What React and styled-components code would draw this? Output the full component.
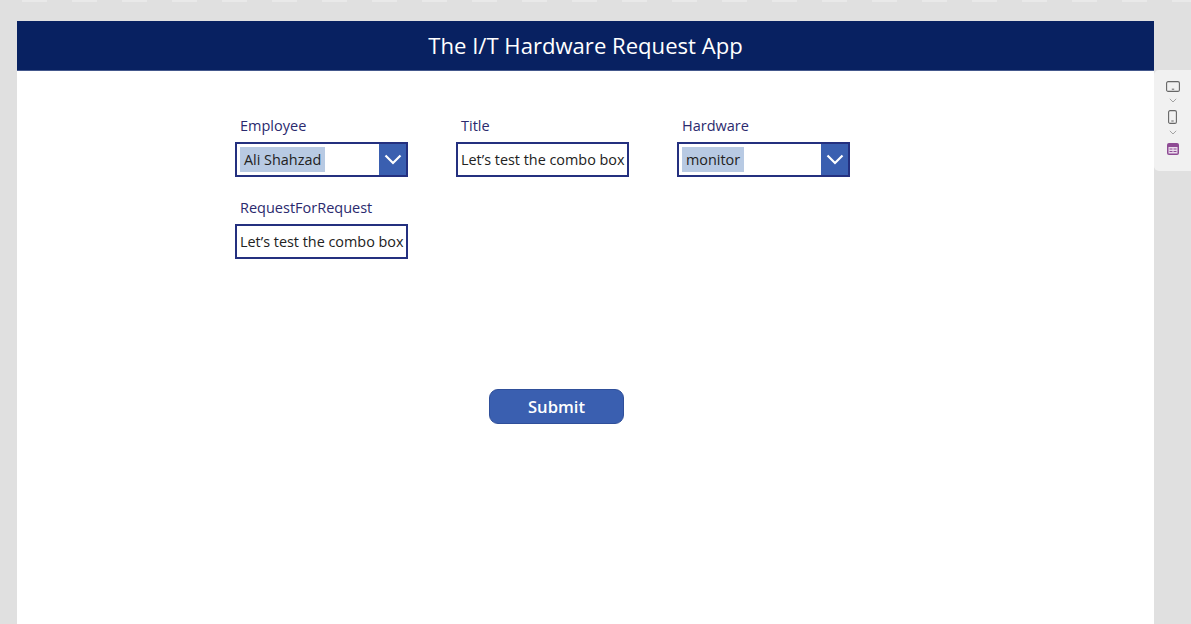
import styled, { createGlobalStyle } from "styled-components";

const GlobalStyle = createGlobalStyle`
  html, body { margin: 0; height: 100%; overflow: hidden; }
  body { background: #e0e0e0; font-family: "Open Sans", "Liberation Sans", sans-serif; }
  #root { height: 100%; }
`;

const Shell = styled.div`
  height: 624px;
  display: flex;
  padding: 21px 0 0 17px;
  box-sizing: border-box;
  position: relative;
  &::before {
    content: "";
    position: absolute;
    left: -3px;
    right: 0;
    top: 0;
    height: 2px;
    background: repeating-linear-gradient(90deg, #e0e0e0 0 25px, #e9e9e9 25px 50px);
  }
`;

const Canvas = styled.main`
  width: 1137px;
  background: #fff;
  display: flex;
  flex-direction: column;
`;

const Header = styled.header`
  height: 49px;
  flex: none;
  background: #082161;
  color: #fff;
  display: flex;
  align-items: center;
  justify-content: center;
  font-size: 22.1px;
  border-bottom: 1px solid #44588c;
  line-height: 47px;
`;

const Form = styled.form`
  display: grid;
  grid-template-columns: repeat(3, 173px);
  column-gap: 48px;
  row-gap: 21px;
  padding: 45px 0 0 218px;
`;

const Field = styled.div`
  display: flex;
  flex-direction: column;
`;

const Label = styled.label`
  height: 26px;
  padding: 0 0 0 5px;
  line-height: 20px;
  font-size: 14.5px;
  color: #2b2a6e;
`;

const Box = styled.div`
  width: 173px;
  height: 35px;
  box-sizing: border-box;
  border: 2px solid #24307f;
  background: #fff;
  display: flex;
  align-items: center;
  font-size: 14.4px;
  color: #222;
  white-space: nowrap;
  overflow: hidden;
`;

const TextValue = styled.span`
  padding-left: 3px;
`;

const Selected = styled.span`
  flex: 1;
  padding-left: 3px;
`;

const Chip = styled.span`
  display: inline-block;
  background: #b8cae3;
  padding: 0 4px;
  height: 25px;
  line-height: 25px;
`;

const Arrow = styled.span`
  width: 27px;
  align-self: stretch;
  background: #3a5fb0;
  display: flex;
  align-items: center;
  justify-content: center;
`;

const SubmitRow = styled.div`
  padding: 130px 0 0 472px;
`;

const SubmitButton = styled.button`
  width: 135px;
  height: 35px;
  border: 1px solid #2f4f9a;
  border-radius: 9px;
  background: #3a5fb0;
  color: #fff;
  font-family: inherit;
  font-size: 16.6px;
  font-weight: 600;
  padding: 0;
`;

const Rail = styled.aside`
  width: 37px;
  height: 101px;
  margin-top: 49px;
  background: #f1f1f1;
  border-radius: 5px 0 0 5px;
  display: flex;
  flex-direction: column;
  align-items: center;
  padding-top: 11px;
  box-sizing: border-box;
`;

const Chevron = () => (
  <svg width="18" height="11" viewBox="0 0 18 11" fill="none">
    <path d="M1.5 1.5 9 9l7.5-7.5" stroke="#fff" strokeWidth="2.2" />
  </svg>
);

const SmallChevron = () => (
  <svg width="8" height="5" viewBox="0 0 8 5" fill="none" style={{ margin: "6px 0 7px" }}>
    <path d="M.8.8 4 4 7.2.8" stroke="#9a9a9a" strokeWidth=".9" />
  </svg>
);

const TabletIcon = () => (
  <svg width="14" height="11" viewBox="0 0 14 11" fill="none">
    <rect x=".6" y=".6" width="12.8" height="9.8" rx="1.5" stroke="#666" strokeWidth="1.1" />
    <path d="M5.8 8.2h2.4" stroke="#666" />
  </svg>
);

const PhoneIcon = () => (
  <svg width="9" height="14" viewBox="0 0 9 14" fill="none">
    <rect x=".6" y=".6" width="7.8" height="12.8" rx="1.5" stroke="#666" strokeWidth="1.1" />
    <path d="M3.3 11h2.4" stroke="#666" />
  </svg>
);

const FormIcon = () => (
  <svg width="12" height="12" viewBox="0 0 12 12" style={{ marginTop: 1 }}>
    <rect width="12" height="12" rx="2" fill="#8e4b94" />
    <rect x="1.5" y="4" width="9" height="6.5" fill="#eadcec" />
    <path d="M2.5 6h3M6.5 6h3M2.5 8.5h3M6.5 8.5h3" stroke="#8e4b94" />
  </svg>
);

const SelectBox = ({ value }) => (
  <Box>
    <Selected>
      <Chip>{value}</Chip>
    </Selected>
    <Arrow>
      <Chevron />
    </Arrow>
  </Box>
);

const fields = [
  { label: "Employee", select: "Ali Shahzad" },
  { label: "Title", text: "Let’s test the combo box" },
  { label: "Hardware", select: "monitor" },
  { label: "RequestForRequest", text: "Let’s test the combo box" },
];

export default function App() {
  return (
    <>
      <GlobalStyle />
      <Shell>
        <Canvas>
          <Header>The I/T Hardware Request App</Header>
          <Form onSubmit={(e) => e.preventDefault()}>
            {fields.map((f) => (
              <Field key={f.label}>
                <Label>{f.label}</Label>
                {f.select ? (
                  <SelectBox value={f.select} />
                ) : (
                  <Box>
                    <TextValue>{f.text}</TextValue>
                  </Box>
                )}
              </Field>
            ))}
          </Form>
          <SubmitRow>
            <SubmitButton>Submit</SubmitButton>
          </SubmitRow>
        </Canvas>
        <Rail>
          <TabletIcon />
          <SmallChevron />
          <PhoneIcon />
          <SmallChevron />
          <FormIcon />
        </Rail>
      </Shell>
    </>
  );
}
